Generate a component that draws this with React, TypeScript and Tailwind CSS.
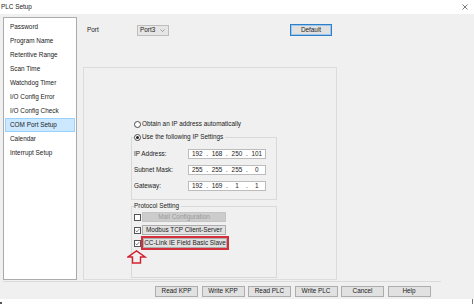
import React from "react";

const items = [
  "Password",
  "Program Name",
  "Retentive Range",
  "Scan Time",
  "Watchdog Timer",
  "I/O Config Error",
  "I/O Config Check",
  "COM Port Setup",
  "Calendar",
  "Interrupt Setup",
];

function Radio({ checked }: { checked?: boolean }) {
  return (
    <span className="w-[7px] h-[7px] rounded-full border border-[#4a4a4a] bg-white flex items-center justify-center shrink-0">
      {checked && <span className="w-[3px] h-[3px] rounded-full bg-[#222]" />}
    </span>
  );
}

function Check({ checked }: { checked?: boolean }) {
  return (
    <span className="w-[7px] h-[7px] border border-[#555] bg-white flex items-center justify-center shrink-0">
      {checked && (
        <svg width="5" height="5" viewBox="0 0 5 5">
          <path d="M0.6 2.6 L1.9 3.9 L4.4 0.9" fill="none" stroke="#555" strokeWidth="0.7" />
        </svg>
      )}
    </span>
  );
}

function IpBox({ parts }: { parts: string[] }) {
  return (
    <div className="w-[78px] h-[10px] bg-white border border-[#bcbcbc] flex items-center px-[1px]">
      {parts.map((p, i) => (
        <React.Fragment key={i}>
          <span className="w-[15px] text-center">{p}</span>
          {i < 3 && <span className="w-[5.5px] text-center">.</span>}
        </React.Fragment>
      ))}
    </div>
  );
}

function Btn({ children }: { children: React.ReactNode }) {
  return (
    <div className="h-[11px] w-[43px] bg-[#e1e1e1] border border-[#adadad] flex items-center justify-center leading-none">
      {children}
    </div>
  );
}

export default function App() {
  return (
    <div className="w-[474px] h-[304px] bg-white overflow-hidden text-[6.4px] leading-none text-[#222] font-['Liberation_Sans',Arial,sans-serif]">
      {/* Title bar */}
      <div className="h-[14px] flex items-center justify-between pl-[1px] pr-[6px]">
        <span>PLC Setup</span>
        <svg width="6" height="6" viewBox="0 0 6 6">
          <path d="M0.5 0.5 L5.5 5.5 M5.5 0.5 L0.5 5.5" stroke="#444" strokeWidth="0.7" />
        </svg>
      </div>

      {/* Body */}
      <div className="h-[285px] bg-[#f0f0f0] flex flex-col">
        <div className="flex h-[267px]">
          {/* Left list */}
          <div className="pl-[3px] pt-[3px] w-[80px] shrink-0">
            <div className="w-[74px] h-[263px] bg-white border border-[#ababab] pt-[2px] px-[1px]">
              {items.map((it) => {
                const sel = it === "COM Port Setup";
                return (
                  <div
                    key={it}
                    className={
                      "h-[14px] flex items-center pl-[4px] border " +
                      (sel ? "bg-[#cce8ff] border-[#99d1ff]" : "border-transparent")
                    }
                  >
                    {it}
                  </div>
                );
              })}
            </div>
          </div>

          {/* Right area */}
          <div className="flex-1 flex flex-col">
            <div className="flex items-center h-[12px] mt-[10px] pl-[7px]">
              <span className="w-[50px]">Port</span>
              <div className="w-[32px] h-[11px] bg-[#e6e6e6] border border-[#bdbdbd] flex items-center justify-between pl-[2px] pr-[3px]">
                <span>Port3</span>
                <svg width="5" height="3" viewBox="0 0 5 3">
                  <path d="M0.5 0.5 L2.5 2.5 L4.5 0.5" fill="none" stroke="#666" strokeWidth="0.6" />
                </svg>
              </div>
              <div className="ml-[121px] w-[42px] h-[12px] bg-[#e1e1e1] border border-[#2f7fc6] shadow-[inset_0_0_0_1px_#9cc6ee] flex items-center justify-center">
                Default
              </div>
            </div>

            {/* Panel */}
            <div className="mt-[31px] ml-[3px] w-[254px] h-[213px] border border-[#dcdcdc] pl-[47px] pt-[51px]">
              <div className="h-[10px] flex items-center gap-[1px] pl-[3px]">
                <Radio />
                <span>Obtain an IP address automatically</span>
              </div>

              <fieldset className="mt-[3px] w-[146px] border border-[#d9d9d9] px-[2px] pb-[8px]">
                <legend className="pr-[2px]">
                  <div className="h-[10px] flex items-center gap-[1px]">
                    <Radio checked />
                    <span>Use the following IP Settings</span>
                  </div>
                </legend>
                <div className="mt-[7px] flex flex-col gap-[6px]">
                  <div className="h-[10px] flex items-center">
                    <span className="w-[54px]">IP Address:</span>
                    <IpBox parts={["192", "168", "250", "101"]} />
                  </div>
                  <div className="h-[10px] flex items-center">
                    <span className="w-[54px]">Subnet Mask:</span>
                    <IpBox parts={["255", "255", "255", "0"]} />
                  </div>
                  <div className="h-[10px] flex items-center">
                    <span className="w-[54px]">Gateway:</span>
                    <IpBox parts={["192", "169", "1", "1"]} />
                  </div>
                </div>
              </fieldset>

              <fieldset className="mt-[1px] w-[146px] border border-[#d9d9d9] px-[2px] pb-[13px]">
                <legend className="pr-[2px]">
                  <div className="h-[10px] flex items-center">Protocol Setting</div>
                </legend>
                <div className="mt-[1px] flex flex-col">
                  <div className="h-[10px] flex items-center gap-[1px]">
                    <Check />
                    <div className="w-[84px] h-[10px] bg-[#cccccc] border border-[#c4c4c4] text-[#9a9a9a] flex items-center justify-center">
                      Mail Configuration
                    </div>
                  </div>
                  <div className="mt-[3px] h-[10px] flex items-center gap-[1px]">
                    <Check checked />
                    <div className="w-[84px] h-[10px] bg-[#e1e1e1] border border-[#adadad] flex items-center justify-center">
                      Modbus TCP Client-Server
                    </div>
                  </div>
                  <div className="mt-[1px] h-[14px] flex items-center">
                    <Check checked />
                    <div className="border-2 border-[#d4303c]">
                      <div className="w-[84px] h-[10px] bg-[#e1e1e1] border border-[#adadad] flex items-center justify-center">
                        CC-Link IE Field Basic Slave
                      </div>
                    </div>
                  </div>
                  <div className="-ml-[7px] h-[14px]">
                    <svg width="20" height="14" viewBox="0 0 20 14">
                      <path
                        d="M9.5 0.9 L18 7 L13.5 7 L13.5 13 L5.5 13 L5.5 7 L1 7 Z"
                        fill="none"
                        stroke="#d4202e"
                        strokeWidth="1.4"
                        strokeLinejoin="miter"
                      />
                    </svg>
                  </div>
                </div>
              </fieldset>
            </div>
          </div>
        </div>

        {/* Separator */}
        <div className="ml-[3px] w-[438px] h-px bg-[#dadada]" />

        {/* Buttons */}
        <div className="pt-[4px] pl-[155px] flex gap-[3.5px]">
          <Btn>Read KPP</Btn>
          <Btn>Write KPP</Btn>
          <Btn>Read PLC</Btn>
          <Btn>Write PLC</Btn>
          <Btn>Cancel</Btn>
          <Btn>Help</Btn>
        </div>
      </div>

      {/* Bottom white strip */}
      <div className="h-[5px] flex items-end justify-between">
        <span className="w-[2px] h-[2px] bg-[#555]" />
        <span className="w-[1px] h-[5px] bg-[#777] mr-[1px]" />
      </div>
    </div>
  );
}
